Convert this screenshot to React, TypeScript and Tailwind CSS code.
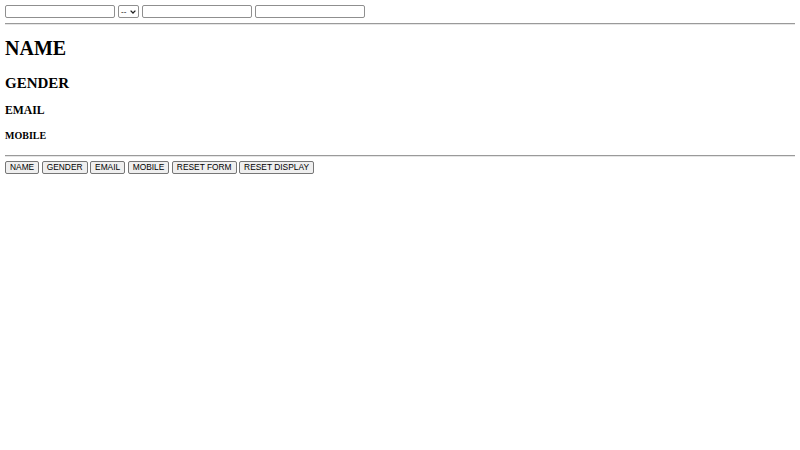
const fields = ["NAME", "GENDER", "EMAIL", "MOBILE"];
const buttons = [...fields, "RESET FORM", "RESET DISPLAY"];

function TextInput() {
  return (
    <input
      type="text"
      className="h-[13px] w-[110px] rounded-[2px] border border-[#8f8f8f] bg-white px-[1px] text-[8.4px]"
    />
  );
}

export default function App() {
  return (
    <div className="min-h-[450px] bg-white p-[5px] font-['Liberation_Serif',serif] text-black">
      <form className="flex h-[13px] items-center gap-[3px]">
        <TextInput />
        <div className="flex h-[13px] w-[21px] items-center justify-between rounded-[2px] border border-[#8f8f8f] bg-white px-[2px] font-['Liberation_Sans',sans-serif] text-[8px] leading-none">
          <span>--</span>
          <svg width="6" height="4" viewBox="0 0 6 4">
            <path d="M0.6 0.6 L3 3 L5.4 0.6" fill="none" stroke="#222" strokeWidth="1.3" />
          </svg>
        </div>
        <TextInput />
        <TextInput />
      </form>
      <hr className="my-[5px] border-0 border-t border-t-[#9a9a9a] border-b border-b-[#e6e6e6]" />
      <h1 className="mt-[12px] mb-[15px] text-[20px] leading-[23px] font-bold">NAME</h1>
      <h2 className="mt-[15px] mb-[11.5px] text-[15px] leading-[17px] font-bold">GENDER</h2>
      <h3 className="mt-[11.5px] mb-[13px] text-[11.7px] leading-[13.5px] font-bold">EMAIL</h3>
      <h4 className="mt-[13px] mb-[13.5px] text-[10px] leading-[11.5px] font-bold">MOBILE</h4>
      <hr className="mt-[5px] mb-[4px] border-0 border-t border-t-[#9a9a9a] border-b border-b-[#e6e6e6]" />
      <div className="flex gap-[2.5px] font-['Liberation_Sans',sans-serif]">
        {buttons.map((label) => (
          <button
            key={label}
            type="button"
            className="h-[13px] rounded-[2px] border border-[#767676] bg-[#efefef] px-[4px] text-[8.4px] leading-none"
          >
            {label}
          </button>
        ))}
      </div>
    </div>
  );
}
